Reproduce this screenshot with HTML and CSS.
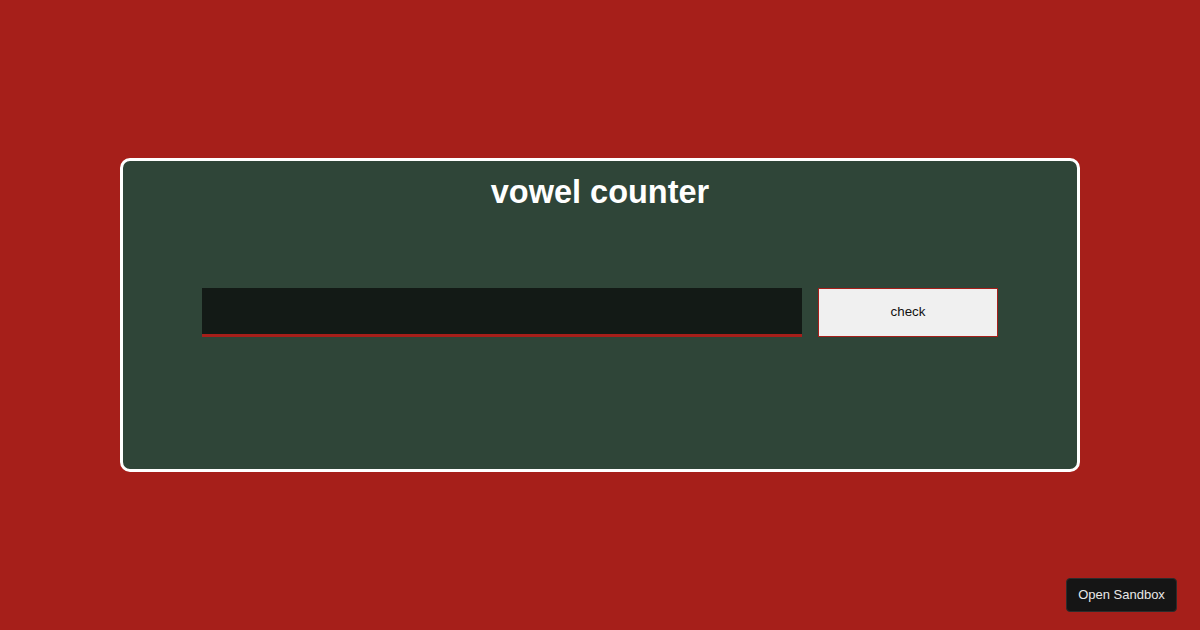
FILE: index.html
```html
<!DOCTYPE html>
<html lang="en">
<head>
<meta charset="utf-8">
<title>vowel counter</title>
<link rel="stylesheet" href="styles.css">
</head>
<body>
<main class="page">
  <section class="card">
    <h1 class="title">vowel counter</h1>
    <div class="row">
      <input class="field" type="text" aria-label="text">
      <button class="check" type="button">check</button>
    </div>
  </section>
</main>
<a class="sandbox" href="#">Open Sandbox</a>
</body>
</html>
```
FILE: styles.css
```css
html, body {
  margin: 0;
  padding: 0;
  height: 100%;
}
body {
  background: #a61f1a;
  font-family: "Liberation Sans", Arial, sans-serif;
}
.page {
  height: 100%;
  display: flex;
  align-items: center;
  justify-content: center;
}
.card {
  box-sizing: border-box;
  width: 960px;
  height: 314px;
  background: #2f4538;
  border: 3px solid #ffffff;
  border-radius: 10px;
  display: flex;
  flex-direction: column;
  align-items: center;
}
.title {
  margin: 12px 0 0;
  font-size: 32.5px;
  font-weight: bold;
  line-height: 38px;
  color: #ffffff;
}
.row {
  margin-top: 77px;
  display: flex;
  gap: 16px;
}
.field {
  box-sizing: border-box;
  width: 600px;
  height: 49px;
  margin: 0;
  padding: 0 10px;
  background: #131a16;
  border: none;
  border-bottom: 3px solid #a61f1a;
  color: #ffffff;
  font: 16px "Liberation Sans", Arial, sans-serif;
  outline: none;
}
.check {
  box-sizing: border-box;
  width: 180px;
  height: 49px;
  margin: 0;
  padding: 0 0 2px;
  background: #f0f0f0;
  border: 1px solid #a61f1a;
  color: #111111;
  font: 13.33px "Liberation Sans", Arial, sans-serif;
  cursor: pointer;
}
.sandbox {
  position: fixed;
  right: 23px;
  bottom: 18px;
  box-sizing: border-box;
  width: 111px;
  height: 34px;
  padding-bottom: 1px;
  display: flex;
  align-items: center;
  justify-content: center;
  background: #151515;
  border: 1px solid #2c2c2c;
  border-radius: 4px;
  color: #e8e8e8;
  font: 13px "Liberation Sans", Arial, sans-serif;
  text-decoration: none;
}
```
